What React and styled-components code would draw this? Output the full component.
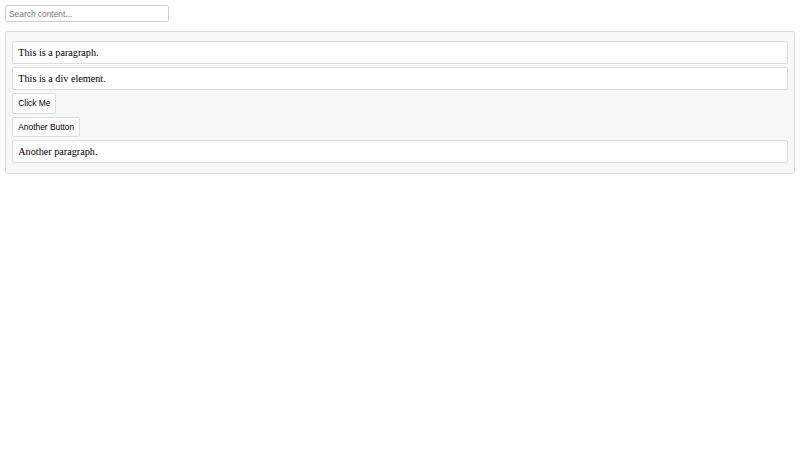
import React, { useState } from 'react';
import styled, { createGlobalStyle } from 'styled-components';

const GlobalStyle = createGlobalStyle`
  html, body {
    margin: 0;
    background: #ffffff;
  }
  body {
    padding: 5px;
    font-family: "Liberation Serif", "Times New Roman", serif;
  }
`;

const SearchInput = styled.input`
  display: block;
  box-sizing: border-box;
  width: 164px;
  height: 17px;
  margin: 0;
  padding: 0 3px;
  font-family: "Liberation Sans", Arial, sans-serif;
  font-size: 8.4px;
  color: #222;
  background: #fff;
  border: 1px solid #cfcfcf;
  border-radius: 2px;
  outline: none;

  &::placeholder {
    color: #767676;
  }
`;

const Panel = styled.div`
  box-sizing: border-box;
  margin-top: 9px;
  padding: 9.4px 6.25px;
  display: flex;
  flex-direction: column;
  align-items: flex-start;
  gap: 3.15px;
  background: #f8f8f8;
  border: 1px solid #dcdcdc;
  border-radius: 3px;
`;

const Block = styled.div`
  box-sizing: border-box;
  align-self: stretch;
  margin: 0;
  padding: 5px 5px;
  height: 22.75px;
  font-size: 10.2px;
  line-height: 11px;
  color: #000;
  background: #fff;
  border: 1px solid #dcdcdc;
  border-radius: 2px;
`;

const Button = styled.button`
  box-sizing: border-box;
  height: 20.5px;
  margin: 0;
  padding: 0 5px;
  font-family: "Liberation Sans", Arial, sans-serif;
  font-size: 8.4px;
  color: #000;
  background: #fff;
  border: 1px solid #dcdcdc;
  border-radius: 2px;
  cursor: pointer;
`;

const items = [
  { kind: 'p', text: 'This is a paragraph.' },
  { kind: 'div', text: 'This is a div element.' },
  { kind: 'button', text: 'Click Me' },
  { kind: 'button', text: 'Another Button' },
  { kind: 'p', text: 'Another paragraph.' },
];

export default function App() {
  const [query, setQuery] = useState('');
  const shown = items.filter((it) =>
    it.text.toLowerCase().includes(query.toLowerCase())
  );

  return (
    <>
      <GlobalStyle />
      <SearchInput
        type="text"
        placeholder="Search content..."
        value={query}
        onChange={(e) => setQuery(e.target.value)}
      />
      <Panel>
        {shown.map((it, i) =>
          it.kind === 'button' ? (
            <Button key={i}>{it.text}</Button>
          ) : (
            <Block key={i} as={it.kind}>
              {it.text}
            </Block>
          )
        )}
      </Panel>
    </>
  );
}
